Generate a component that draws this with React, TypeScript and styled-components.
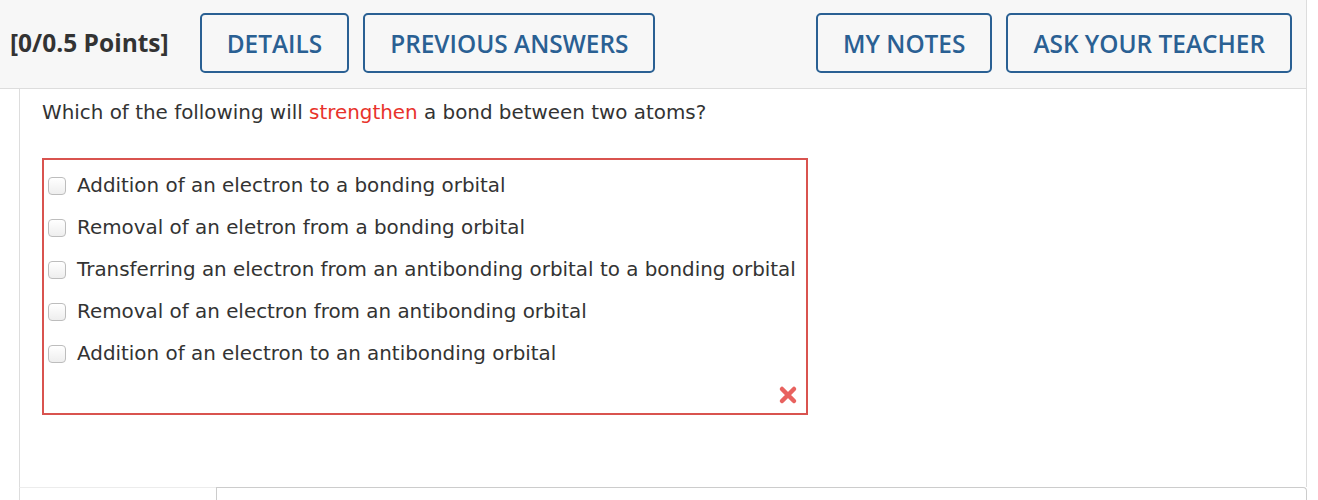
import styled, { createGlobalStyle } from "styled-components";

const GlobalStyle = createGlobalStyle`
    body {
        margin: 0;
        background: #ffffff;
    }
`;

const options = [
    "Addition of an electron to a bonding orbital",
    "Removal of an eletron from a bonding orbital",
    "Transferring an electron from an antibonding orbital to a bonding orbital",
    "Removal of an electron from an antibonding orbital",
    "Addition of an electron to an antibonding orbital",
];

export default function App(){
    return(
        <Page>
            <GlobalStyle />
            <Header>
                <Points>[0/0.5 Points]</Points>
                <ButtonGroup>
                    <HeaderButton>DETAILS</HeaderButton>
                    <HeaderButton>PREVIOUS ANSWERS</HeaderButton>
                </ButtonGroup>
                <ButtonGroup>
                    <HeaderButton>MY NOTES</HeaderButton>
                    <HeaderButton>ASK YOUR TEACHER</HeaderButton>
                </ButtonGroup>
            </Header>
            <Body>
                <Question>
                    Which of the following will <Highlight>strengthen</Highlight> a bond between two atoms?
                </Question>
                <AnswerBox>
                    {options.map((text) => (
                        <Option key={text}>
                            <Box />
                            <Label>{text}</Label>
                        </Option>
                    ))}
                    <WrongMark>
                        <svg width="20" height="20" viewBox="0 0 20 20">
                            <path d="M4 4 L16 16 M16 4 L4 16" stroke="#e8625f" strokeWidth="4.5" strokeLinecap="round" />
                        </svg>
                    </WrongMark>
                </AnswerBox>
            </Body>
            <Footer>
                <FooterLeft />
                <FooterRight />
            </Footer>
        </Page>
    );
}

const Page = styled.div`
    width: 1307px;
`;

const Header = styled.div`
    height: 89px;
    box-sizing: border-box;
    background-color: #f7f7f7;
    border-right: 1px solid #dddddd;
    border-bottom: 1px solid #dddddd;
    display: flex;
    align-items: flex-start;
    padding: 13px 14px 0 10px;
`;

const Points = styled.div`
    font-family: "Open Sans", sans-serif;
    font-weight: 700;
    font-size: 24.5px;
    color: #333333;
    line-height: 60px;
    margin-right: 31px;
    white-space: nowrap;
`;

const ButtonGroup = styled.div`
    display: flex;
    gap: 14px;
    &:last-child {
        margin-left: auto;
    }
`;

const HeaderButton = styled.div`
    height: 60px;
    box-sizing: border-box;
    border: 2px solid #2a6093;
    border-radius: 5px;
    padding: 0 25px;
    display: flex;
    align-items: center;
    font-family: "Open Sans", sans-serif;
    font-weight: 600;
    font-size: 24.4px;
    color: #2a6093;
    background: #f7f7f7;
    white-space: nowrap;
`;

const Body = styled.div`
    margin-left: 19px;
    height: 398px;
    border-left: 1px solid #dddddd;
    border-right: 1px solid #dddddd;
    padding: 11px 0 0 22px;
    box-sizing: border-box;
`;

const Question = styled.div`
    font-family: "DejaVu Sans", Verdana, sans-serif;
    font-size: 19.9px;
    color: #333333;
    line-height: 26px;
    margin-bottom: 32px;
    white-space: nowrap;
`;

const Highlight = styled.span`
    color: #e8322b;
`;

const AnswerBox = styled.div`
    position: relative;
    width: 766px;
    height: 257px;
    box-sizing: border-box;
    border: 2px solid #d9534f;
    padding: 12px 0 0 4px;
    display: flex;
    flex-direction: column;
    gap: 16px;
`;

const Option = styled.div`
    display: flex;
    align-items: center;
    height: 26px;
`;

const Box = styled.div`
    width: 18px;
    height: 18px;
    box-sizing: border-box;
    border: 1px solid #bdbdbd;
    border-radius: 4px;
    background: linear-gradient(#ffffff, #eeeeee);
    margin-right: 11px;
    margin-top: 2px;
`;

const Label = styled.div`
    font-family: "DejaVu Sans", Verdana, sans-serif;
    font-size: 19.9px;
    color: #333333;
    white-space: nowrap;
`;

const WrongMark = styled.div`
    position: absolute;
    right: 8px;
    bottom: 8px;
    width: 20px;
    height: 20px;
`;

const Footer = styled.div`
    display: flex;
    margin-left: 19px;
`;

const FooterLeft = styled.div`
    width: 196px;
    height: 12px;
    border-top: 1px solid #ececec;
    border-left: 1px solid #dddddd;
`;

const FooterRight = styled.div`
    flex: 1;
    height: 12px;
    border-top: 1px solid #cccccc;
    border-left: 1px solid #cccccc;
    border-right: 1px solid #cccccc;
    border-top-right-radius: 4px;
`;
